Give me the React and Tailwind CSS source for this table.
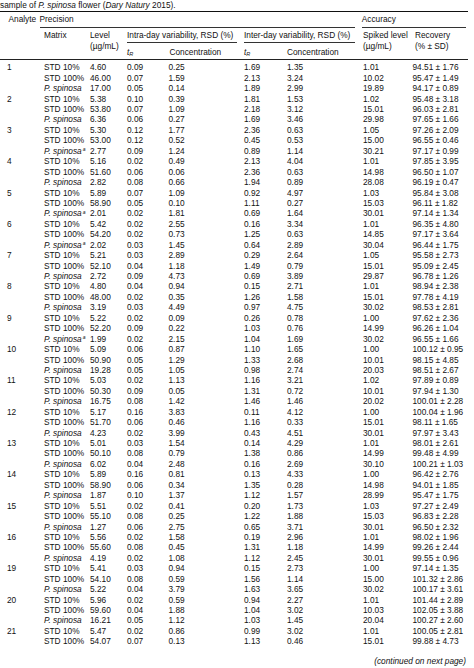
const GRID = "grid grid-cols-[37px_46px_37px_41.5px_75.5px_43px_76px_49.5px_1fr]";

const DATA = [
  ["1", [
    ["10", "4.60", "0.09", "0.25", "1.69", "1.35", "1.01", "94.51 ± 1.76"],
    ["100", "46.00", "0.07", "1.59", "2.13", "3.24", "10.02", "95.47 ± 1.49"],
    ["P", "17.00", "0.05", "0.14", "1.89", "2.99", "19.89", "94.17 ± 0.89"],
  ]],
  ["2", [
    ["10", "5.38", "0.10", "0.39", "1.81", "1.53", "1.02", "95.48 ± 3.18"],
    ["100", "53.80", "0.07", "1.09", "2.18", "3.12", "15.01", "96.03 ± 2.81"],
    ["P", "6.36", "0.06", "0.27", "1.69", "3.46", "29.98", "97.65 ± 1.66"],
  ]],
  ["3", [
    ["10", "5.30", "0.12", "1.77", "2.36", "0.63", "1.05", "97.26 ± 2.09"],
    ["100", "53.00", "0.12", "0.52", "0.45", "0.53", "15.00", "96.55 ± 0.46"],
    ["Pa", "2.77", "0.09", "1.24", "0.89", "1.14", "30.21", "97.17 ± 0.99"],
  ]],
  ["4", [
    ["10", "5.16", "0.02", "0.49", "2.13", "4.04", "1.01", "97.85 ± 3.95"],
    ["100", "51.60", "0.06", "0.06", "2.36", "0.63", "14.98", "96.50 ± 1.07"],
    ["P", "2.82", "0.08", "0.66", "1.94", "0.89", "28.08", "96.19 ± 0.47"],
  ]],
  ["5", [
    ["10", "5.89", "0.07", "1.09", "0.92", "4.97", "1.03", "95.84 ± 3.08"],
    ["100", "58.90", "0.05", "0.10", "1.11", "0.27", "15.03", "96.11 ± 1.82"],
    ["Pa", "2.01", "0.02", "1.81", "0.69", "1.64", "30.01", "97.14 ± 1.34"],
  ]],
  ["6", [
    ["10", "5.42", "0.02", "2.55", "0.16", "3.34", "1.01", "96.35 ± 4.80"],
    ["100", "54.20", "0.02", "0.73", "1.25", "0.63", "14.85", "97.17 ± 3.64"],
    ["Pa", "2.02", "0.03", "1.45", "0.64", "2.89", "30.04", "96.44 ± 1.75"],
  ]],
  ["7", [
    ["10", "5.21", "0.03", "2.89", "0.29", "2.64", "1.05", "95.58 ± 2.73"],
    ["100", "52.10", "0.04", "1.18", "1.49", "0.79", "15.01", "95.09 ± 2.45"],
    ["P", "2.72", "0.09", "4.73", "0.69", "3.89", "29.87", "96.78 ± 1.26"],
  ]],
  ["8", [
    ["10", "4.80", "0.04", "0.94", "0.15", "2.71", "1.01", "98.94 ± 2.38"],
    ["100", "48.00", "0.02", "0.35", "1.26", "1.58", "15.01", "97.78 ± 4.19"],
    ["P", "3.19", "0.03", "4.49", "0.97", "4.75", "30.02", "98.53 ± 2.81"],
  ]],
  ["9", [
    ["10", "5.22", "0.02", "0.09", "0.26", "0.78", "1.00", "97.62 ± 2.36"],
    ["100", "52.20", "0.09", "0.22", "1.03", "0.76", "14.99", "96.26 ± 1.04"],
    ["Pa", "1.99", "0.02", "2.15", "1.04", "1.69", "30.02", "96.55 ± 1.66"],
  ]],
  ["10", [
    ["10", "5.09", "0.06", "0.87", "1.10", "1.65", "1.00", "100.12 ± 0.95"],
    ["100", "50.90", "0.05", "1.29", "1.33", "2.68", "10.01", "98.15 ± 4.85"],
    ["P", "19.28", "0.05", "1.05", "0.98", "2.74", "20.03", "98.51 ± 2.67"],
  ]],
  ["11", [
    ["10", "5.03", "0.02", "1.13", "1.16", "3.21", "1.02", "97.89 ± 0.89"],
    ["100", "50.30", "0.09", "0.05", "1.31", "0.72", "10.01", "97.94 ± 1.30"],
    ["P", "16.75", "0.08", "1.42", "1.46", "1.46", "20.02", "100.01 ± 2.28"],
  ]],
  ["12", [
    ["10", "5.17", "0.16", "3.83", "0.11", "4.12", "1.00", "100.04 ± 1.96"],
    ["100", "51.70", "0.06", "0.46", "1.16", "0.33", "15.01", "98.11 ± 1.65"],
    ["P", "4.23", "0.02", "3.99", "0.43", "4.51", "30.01", "97.97 ± 3.43"],
  ]],
  ["13", [
    ["10", "5.01", "0.03", "1.54", "0.14", "4.29", "1.01", "98.01 ± 2.61"],
    ["100", "50.10", "0.08", "0.79", "1.38", "0.86", "14.99", "99.48 ± 4.99"],
    ["P", "6.02", "0.04", "2.48", "0.16", "2.69", "30.10", "100.21 ± 1.03"],
  ]],
  ["14", [
    ["10", "5.89", "0.16", "0.81", "0.13", "4.33", "1.00", "96.42 ± 2.76"],
    ["100", "58.90", "0.06", "0.34", "1.35", "0.28", "14.98", "94.01 ± 1.85"],
    ["P", "1.87", "0.10", "1.37", "1.12", "1.57", "28.99", "95.47 ± 1.75"],
  ]],
  ["15", [
    ["10", "5.51", "0.02", "0.41", "0.20", "1.73", "1.03", "97.27 ± 2.49"],
    ["100", "55.10", "0.08", "0.25", "1.22", "1.88", "15.03", "96.83 ± 2.28"],
    ["P", "1.27", "0.06", "2.75", "0.65", "3.71", "30.01", "96.50 ± 2.32"],
  ]],
  ["16", [
    ["10", "5.56", "0.02", "1.58", "0.19", "2.96", "1.01", "98.02 ± 1.96"],
    ["100", "55.60", "0.08", "0.45", "1.31", "1.18", "14.99", "99.26 ± 2.44"],
    ["P", "4.19", "0.02", "1.08", "1.12", "2.45", "30.01", "99.55 ± 0.96"],
  ]],
  ["19", [
    ["10", "5.41", "0.03", "0.94", "0.15", "2.73", "1.00", "97.14 ± 1.35"],
    ["100", "54.10", "0.08", "0.59", "1.56", "1.14", "15.00", "101.32 ± 2.86"],
    ["P", "5.22", "0.04", "3.79", "1.63", "3.65", "30.02", "100.17 ± 3.61"],
  ]],
  ["20", [
    ["10", "5.96", "0.02", "0.59", "0.94", "2.27", "1.01", "101.44 ± 2.89"],
    ["100", "59.60", "0.04", "1.88", "1.04", "3.02", "10.03", "102.05 ± 3.88"],
    ["P", "16.21", "0.05", "1.12", "1.03", "1.45", "20.04", "100.27 ± 2.60"],
  ]],
  ["21", [
    ["10", "5.47", "0.02", "0.86", "0.99", "3.02", "1.01", "100.05 ± 2.81"],
    ["100", "54.07", "0.07", "0.13", "1.13", "0.46", "15.01", "99.88 ± 4.73"],
  ]],
];

const TR = () => (
  <span className="italic">
    t<sub className="text-[5.5px]">R</sub>
  </span>
);

const Matrix = ({ code }) => {
  if (code === "10") return <span>STD 10%</span>;
  if (code === "100") return <span>STD 100%</span>;
  return (
    <span className="italic">
      P. spinosa
      {code === "Pa" && <sup className="text-[5px] pl-[1px]">a</sup>}
    </span>
  );
};

const Row = ({ num, cells }) => {
  const [code, ...vals] = cells;
  return (
    <div className={`${GRID} h-[10.44px] pl-[7px] leading-[10.44px] whitespace-nowrap`}>
      <span>{num}</span>
      <Matrix code={code} />
      {vals.map((v, i) => (
        <span key={i}>{v}</span>
      ))}
    </div>
  );
};

export default function App() {
  return (
    <div className="w-[474px] h-[668px] overflow-hidden bg-white text-[#111] text-[8.3px] font-['Liberation_Sans',Arial,sans-serif]">
      <div className="h-[11px] leading-[10.44px] whitespace-nowrap">
        sample of <i>P. spinosa</i> flower (<i>Dary Natury</i> 2015).
      </div>

      <div className="w-[468px] border-t-[1.5px] border-b border-t-[#111] border-b-[#222]">
        <div className={`${GRID} grid-rows-[15.5px_15px_16px] pl-[7px] leading-[10.44px] whitespace-nowrap`}>
          <div className="col-start-1 row-start-1 pt-[2.3px] pl-[1.5px]">Analyte</div>
          <div className="col-start-2 col-span-6 row-start-1 -ml-[4.5px] mr-[8px] pt-[2.3px] border-b border-[#333]">
            Precision
          </div>
          <div className="col-start-8 col-span-2 row-start-1 -ml-[1.3px] mr-[2px] pt-[2.3px] border-b border-[#333]">
            Accuracy
          </div>

          <div className="col-start-2 row-start-2 pt-[2.8px]">Matrix</div>
          <div className="col-start-3 row-start-2 row-span-2 pt-[2.8px]">
            Level
            <br />
            (µg/mL)
          </div>
          <div className="col-start-4 col-span-2 row-start-2 mr-[7px] pt-[2.8px] border-b border-[#333]">
            Intra-day variability, RSD (%)
          </div>
          <div className="col-start-6 col-span-2 row-start-2 mr-[8px] pt-[2.8px] border-b border-[#333]">
            Inter-day variability, RSD (%)
          </div>
          <div className="col-start-8 row-start-2 row-span-2 pt-[2.8px]">
            Spiked level
            <br />
            (µg/mL)
          </div>
          <div className="col-start-9 row-start-2 row-span-2 pl-[2.5px] pt-[2.8px]">
            Recovery
            <br />
            (% ± SD)
          </div>

          <div className="col-start-4 row-start-3 pt-[4.1px]">
            <TR />
          </div>
          <div className="col-start-5 row-start-3 pl-[1px] pt-[4.1px]">Concentration</div>
          <div className="col-start-6 row-start-3 pt-[4.1px]">
            <TR />
          </div>
          <div className="col-start-7 row-start-3 pt-[4.1px]">Concentration</div>
        </div>
      </div>

      <div className="pt-[2.8px]">
        {DATA.map(([num, rows]) =>
          rows.map((cells, i) => <Row key={num + "-" + i} num={i === 0 ? num : ""} cells={cells} />)
        )}
      </div>

      <div className="w-[468px] mt-[8.9px] pr-[2px] text-right italic leading-[10.44px]">
        (continued on next page)
      </div>
    </div>
  );
}
